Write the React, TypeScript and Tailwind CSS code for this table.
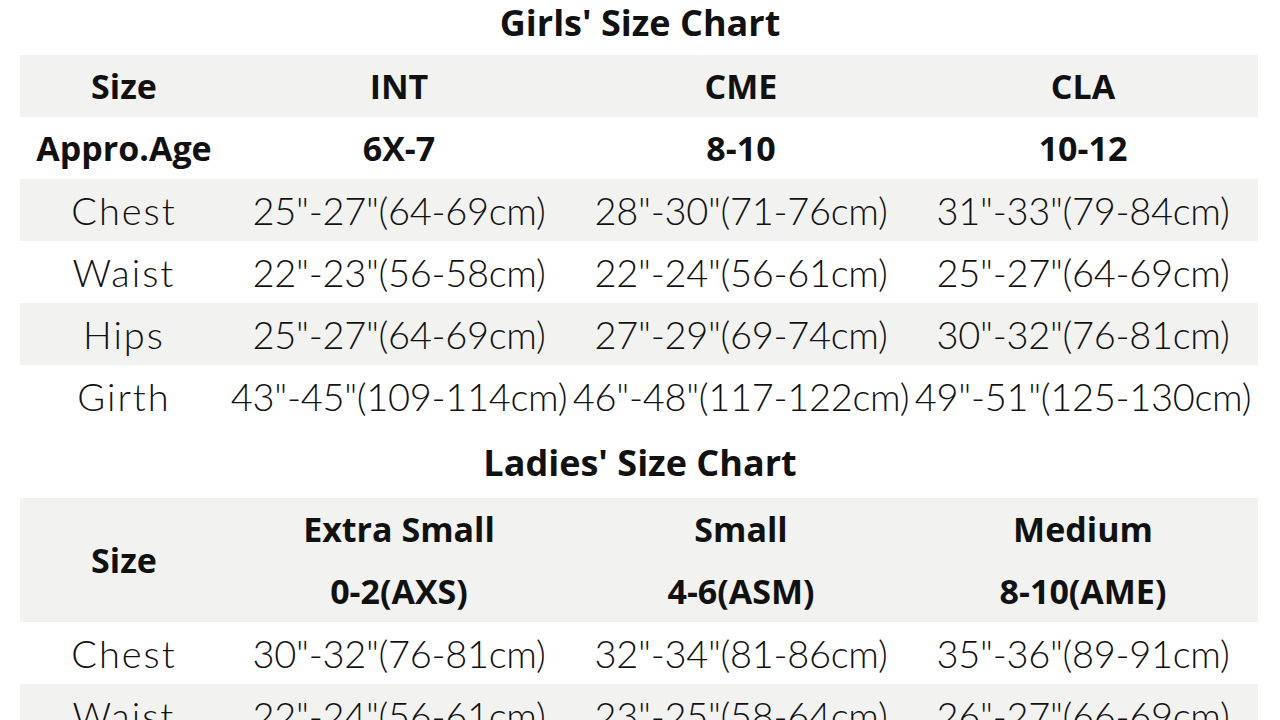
const girls = [
  ['Chest', '25"-27"(64-69cm)', '28"-30"(71-76cm)', '31"-33"(79-84cm)'],
  ['Waist', '22"-23"(56-58cm)', '22"-24"(56-61cm)', '25"-27"(64-69cm)'],
  ['Hips', '25"-27"(64-69cm)', '27"-29"(69-74cm)', '30"-32"(76-81cm)'],
  ['Girth', '43"-45"(109-114cm)', '46"-48"(117-122cm)', '49"-51"(125-130cm)'],
];

const ladies = [
  ['Chest', '30"-32"(76-81cm)', '32"-34"(81-86cm)', '35"-36"(89-91cm)'],
  ['Waist', '22"-24"(56-61cm)', '23"-25"(58-64cm)', '26"-27"(66-69cm)'],
];

const cols = 'grid grid-cols-[208px_342px_342px_342px]';
const bold = "font-['Open_Sans',sans-serif] font-bold text-[34px] text-[#111]";
const light = "font-['Lato',sans-serif] font-light text-[38px] text-[#111]";

function BoldRow({ cells, gray }: { cells: string[]; gray?: boolean }) {
  return (
    <div className={`${cols} h-[62px] items-center ${gray ? 'bg-[#f2f2f1]' : ''}`}>
      {cells.map((c, i) => (
        <div key={i} className={`${bold} text-center whitespace-nowrap`}>
          {c}
        </div>
      ))}
    </div>
  );
}

function ValueRow({ cells, gray }: { cells: string[]; gray?: boolean }) {
  return (
    <div className={`${cols} h-[62px] items-center ${gray ? 'bg-[#f2f2f1]' : ''}`}>
      {cells.map((c, i) => (
        <div
          key={i}
          className={`${light} text-center whitespace-nowrap ${i === 0 ? 'tracking-[2px]' : 'tracking-[-0.3px]'}`}
        >
          {c}
        </div>
      ))}
    </div>
  );
}

export default function App() {
  return (
    <div className="w-[1280px] h-[720px] overflow-hidden bg-white">
      <h1 className={`${bold} text-[36px] leading-none h-[55px] pt-[3px] pb-[13px] flex items-center justify-center`}>
        Girls' Size Chart
      </h1>
      <div className="ml-[20px] w-[1238px]">
        <BoldRow cells={['Size', 'INT', 'CME', 'CLA']} gray />
        <BoldRow cells={['Appro.Age', '6X-7', '8-10', '10-12']} />
        {girls.map((r, i) => (
          <ValueRow key={r[0]} cells={r} gray={i % 2 === 0} />
        ))}
      </div>

      <h2 className={`${bold} text-[36px] h-[71px] flex items-center justify-center`}>
        Ladies' Size Chart
      </h2>
      <div className="ml-[20px] w-[1238px]">
        <div className={`${cols} h-[124px] items-center bg-[#f2f2f1]`}>
          <div className={`${bold} text-center`}>Size</div>
          {[
            ['Extra Small', '0-2(AXS)'],
            ['Small', '4-6(ASM)'],
            ['Medium', '8-10(AME)'],
          ].map(([a, b]) => (
            <div key={a} className={`${bold} text-center flex flex-col`}>
              <span className="h-[62px] flex items-center justify-center">{a}</span>
              <span className="h-[62px] flex items-center justify-center">{b}</span>
            </div>
          ))}
        </div>
        {ladies.map((r, i) => (
          <ValueRow key={r[0]} cells={r} gray={i % 2 === 1} />
        ))}
      </div>
    </div>
  );
}
